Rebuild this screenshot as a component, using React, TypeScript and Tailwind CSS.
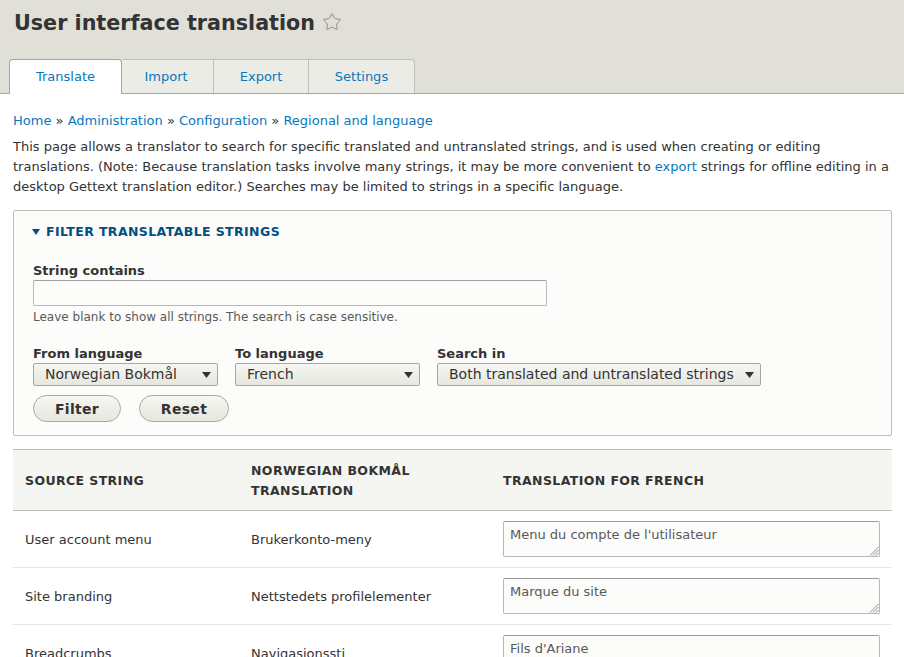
import { Star } from 'lucide-react';

const font = { fontFamily: '"DejaVu Sans", sans-serif' };

const tabs = ['Translate', 'Import', 'Export', 'Settings'];

const filters = [
  { label: 'From language', value: 'Norwegian Bokmål', width: 'w-[185px]' },
  { label: 'To language', value: 'French', width: 'w-[185px]' },
  { label: 'Search in', value: 'Both translated and untranslated strings', width: 'w-[324px]' },
];

const rows = [
  { source: 'User account menu', norwegian: 'Brukerkonto-meny', french: "Menu du compte de l'utilisateur" },
  { source: 'Site branding', norwegian: 'Nettstedets profilelementer', french: 'Marque du site' },
  { source: 'Breadcrumbs', norwegian: 'Navigasjonssti', french: "Fils d'Ariane" },
];

function SelectBox({ value, width }: { value: string; width: string }) {
  return (
    <div className={`mt-[1px] flex h-[23px] items-center justify-between rounded-[2px] border border-[#a6a6a6] bg-gradient-to-b from-[#f6f6f3] to-[#e7e7df] pl-[11px] pr-[6px] text-[14px] text-[#333] ${width}`}>
      <span className="whitespace-nowrap">{value}</span>
      <svg width="9" height="6" viewBox="0 0 9 6"><path d="M0 0h9L4.5 6z" fill="#333" /></svg>
    </div>
  );
}

export default function App() {
  return (
    <div className="h-[657px] overflow-hidden bg-white text-[13px] text-[#333]" style={font}>
      <div className="h-[94px] border-b border-[#a6a6a6] bg-[#e0e0d8]">
        <div className="flex h-[59px] items-start pl-[14px] pt-[9px]">
          <h1 className="text-[20.7px] font-bold leading-[28px] text-[#333]">User interface translation</h1>
          <Star className="ml-[7px] mt-[3px] h-[20px] w-[20px] text-[#8e8e85]" strokeWidth={1.2} />
        </div>
        <div className="flex h-[35px] pl-[9px]">
          {tabs.map((tab, i) => (
            <div
              key={tab}
              className={
                i === 0
                  ? 'flex h-[35px] w-[113px] items-center justify-center rounded-t-[4px] border-x border-t border-[#a6a6a6] bg-white text-[#0678be]'
                  : `flex h-[34px] items-center justify-center border-r border-t border-[#bfbfba] bg-[#ecece6] text-[#0678be] ${i === 1 ? 'w-[92px] pr-[3px]' : i === 2 ? 'w-[95px]' : 'w-[106px] rounded-tr-[4px]'}`
              }
            >
              {tab}
            </div>
          ))}
        </div>
      </div>

      <div className="pl-[13px] pr-[12px]">
        <div className="mt-[17px] leading-[20px] text-[#0678be]">
          Home <span className="text-[#333]">»</span> Administration <span className="text-[#333]">»</span> Configuration <span className="text-[#333]">»</span> Regional and language
        </div>
        <p className="mt-[6px] leading-[20px]">
          This page allows a translator to search for specific translated and untranslated strings, and is used when creating or editing translations. (Note: Because translation tasks involve many strings, it may be more convenient to <span className="text-[#0678be]">export</span> strings for offline editing in a desktop Gettext translation editor.) Searches may be limited to strings in a specific language.
        </p>

        <div className="mt-[13px] h-[226px] rounded-[2px] border border-[#bfbfba] bg-[#fcfcfa] pl-[19px]">
          <div className="mt-[13px] flex items-center gap-[6px] text-[12.5px] font-bold uppercase leading-[16px] tracking-[0.4px] text-[#004f80]">
            <svg width="8" height="6" viewBox="0 0 8 6" className="-ml-[1px]"><path d="M0 0h8L4 6z" fill="#004f80" /></svg>
            Filter translatable strings
          </div>
          <label className="mt-[23px] block font-bold leading-[16px]">String contains</label>
          <div className="mt-[1px] h-[26px] w-[514px] rounded-[2px] border border-[#b8b8b8] border-t-[#a0a0a0] bg-[#fcfcfa]" />
          <div className="mt-[3px] text-[12px] leading-[16px] text-[#595959]">Leave blank to show all strings. The search is case sensitive.</div>
          <div className="mt-[21px] flex gap-[17px]">
            {filters.map(filter => (
              <div key={filter.label}>
                <div className="font-bold leading-[16px]">{filter.label}</div>
                <SelectBox value={filter.value} width={filter.width} />
              </div>
            ))}
          </div>
          <div className="mt-[9px] flex gap-[18px]">
            <div className="flex h-[27px] w-[88px] items-center justify-center rounded-[14px] border border-[#a6a6a6] bg-gradient-to-b from-[#f6f6f3] to-[#e7e7df] pt-[1px] text-[14px] font-bold tracking-[0.3px]">Filter</div>
            <div className="flex h-[27px] w-[90px] items-center justify-center rounded-[14px] border border-[#a6a6a6] bg-gradient-to-b from-[#f6f6f3] to-[#e7e7df] pt-[1px] text-[14px] font-bold tracking-[0.3px]">Reset</div>
          </div>
        </div>

        <table className="mt-[13px] w-[879px] table-fixed border-collapse">
          <thead>
            <tr className="h-[61px] border-y border-[#bfbfba] bg-[#f5f5f2] text-left text-[12.5px] uppercase leading-[20px] tracking-[0.4px]">
              <th className="w-[226px] pl-[12px] pt-[2px] font-bold">Source string</th>
              <th className="w-[252px] pl-[12px] pr-[40px] pt-[2px] font-bold">Norwegian Bokmål translation</th>
              <th className="pl-[12px] pt-[2px] font-bold">Translation for French</th>
            </tr>
          </thead>
          <tbody>
            {rows.map(row => (
              <tr key={row.source} className="h-[57px] border-b border-[#e6e6e2]">
                <td className="pl-[12px] pt-[2px]">{row.source}</td>
                <td className="pl-[12px] pt-[2px]">{row.norwegian}</td>
                <td className="pl-[12px] pr-[12px]">
                  <div className="relative h-[36px] rounded-[2px] border border-[#b8b8b8] border-t-[#999] bg-[#fcfcfa] px-[6px] pt-[3px] leading-[20px] text-[#595959]">
                    {row.french}
                    <svg width="10" height="10" viewBox="0 0 10 10" className="absolute bottom-0 right-0">
                      <path d="M9.5 1L1 9.5M9.5 4L4 9.5M9.5 7L7 9.5" stroke="#8a8a8a" strokeWidth="1" />
                    </svg>
                  </div>
                </td>
              </tr>
            ))}
          </tbody>
        </table>
      </div>
    </div>
  );
}
